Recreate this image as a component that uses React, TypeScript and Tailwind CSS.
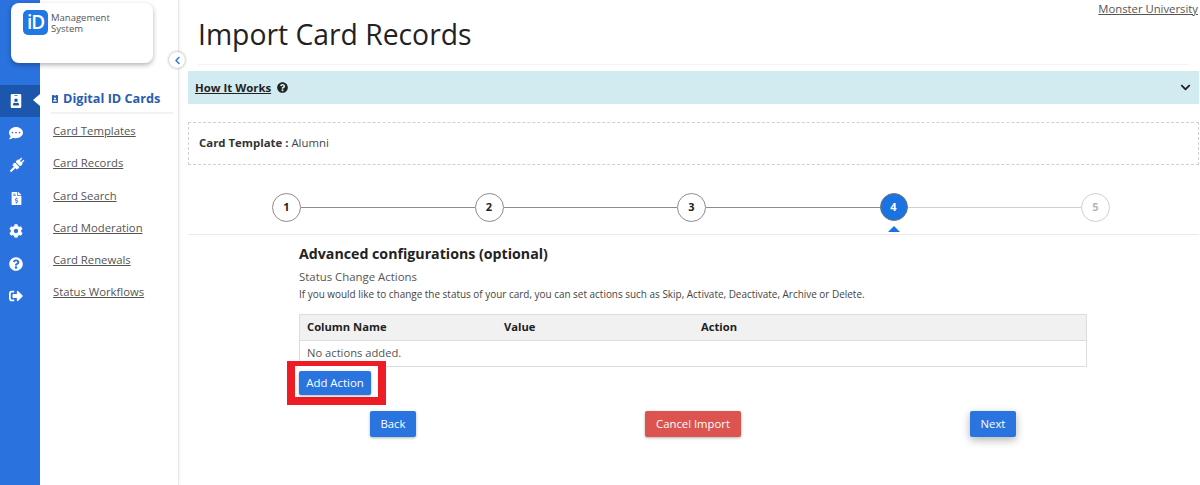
import React from 'react';
import {
  FaIdBadge,
  FaCommentDots,
  FaFileInvoiceDollar,
  FaCog,
  FaQuestionCircle,
  FaSignOutAlt,
  FaChevronDown,
  FaChevronLeft,
} from 'react-icons/fa';

// diagonal two part connector, no package has this one
const PlugIcon = ({ size }: { size: number }) => (
  <svg width={size} height={size} viewBox="0 0 16 16" fill="currentColor">
    <g transform="rotate(45 8 8)">
      <rect x="5.9" y="-0.4" width="1.3" height="3.4" />
      <rect x="8.8" y="-0.4" width="1.3" height="3.4" />
      <rect x="4.8" y="2.6" width="6.4" height="3.6" rx="1" />
      <rect x="4.8" y="7" width="6.4" height="3.6" rx="1" />
      <rect x="7.1" y="10" width="1.8" height="6" />
    </g>
  </svg>
);

const railIcons = [
  { Icon: FaCommentDots, size: 14 },
  { Icon: PlugIcon, size: 17 },
  { Icon: FaFileInvoiceDollar, size: 13 },
  { Icon: FaCog, size: 14 },
  { Icon: FaQuestionCircle, size: 14 },
  { Icon: FaSignOutAlt, size: 14 },
];

const menuLinks = ['Card Templates', 'Card Records', 'Card Search', 'Card Moderation', 'Card Renewals', 'Status Workflows'];

const steps = [1, 2, 3, 4, 5];

const StepDot = ({ n }: { n: number }) => {
  if (n === 4) {
    return (
      <div className="relative z-10 flex h-[28px] w-[28px] shrink-0 items-center justify-center rounded-full border border-[#777] bg-[#1a73e0] text-[11px] font-bold text-white">
        {n}
        <div className="absolute left-[7px] top-[32px] h-0 w-0 border-x-[6px] border-b-[6px] border-x-transparent border-b-[#1a73e0]" />
      </div>
    );
  }
  if (n === 5) {
    return (
      <div className="z-10 flex h-[29px] w-[29px] shrink-0 items-center justify-center rounded-full border border-[#d0d0d0] bg-white text-[11px] font-bold text-[#b5b5b5]">
        {n}
      </div>
    );
  }
  return (
    <div className="z-10 flex h-[29px] w-[29px] shrink-0 items-center justify-center rounded-full border border-[#8c8c8c] bg-white text-[11px] font-bold text-[#222]">
      {n}
    </div>
  );
};

const ActionButton = ({ label, wide, red, shadow }: { label: string; wide?: boolean; red?: boolean; shadow?: boolean }) => (
  <button
    className={`h-[26px] rounded-[2px] text-[11.3px] text-white ${wide ? 'w-[96px]' : 'w-[46px]'} ${red ? 'bg-[#db5450]' : 'bg-[#2a74e0]'} ${
      shadow ? 'shadow-[0_3px_8px_rgba(0,0,0,0.3)]' : 'shadow-[0_1px_3px_rgba(0,0,0,0.3)]'
    }`}
  >
    {label}
  </button>
);

export default function App() {
  return (
    <div className="flex h-[485px] w-[1200px] overflow-hidden bg-white font-['Open_Sans',sans-serif] text-[#444]">
      {/* Icon rail */}
      <div className="flex w-[40px] shrink-0 flex-col bg-[#2a72de] pt-[85px]">
        <div className="flex h-[32px] items-center justify-center bg-[#1c57ad] pr-[8px] text-white">
          <FaIdBadge size={14} />
        </div>
        {railIcons.map(({ Icon, size }, i) => (
          <div key={i} className="flex h-[32.6px] items-center justify-center pr-[8px] text-white">
            <Icon size={size} />
          </div>
        ))}
      </div>

      {/* Menu column */}
      <div className="relative flex w-[139px] shrink-0 flex-col border-r border-[#e8e8e8] pl-[11px] pr-[5px] pt-[85px] shadow-[1px_0_3px_rgba(0,0,0,0.05)]">
        <div className="absolute left-[-29px] top-[3px] z-20 h-[60px] w-[142px] rounded-[8px] bg-white shadow-[0_2px_5px_rgba(0,0,0,0.3)]">
          <div className="absolute left-[12px] top-[7px] flex h-[25px] w-[25px] items-center justify-center rounded-[5px] bg-[#1f78e6] text-[19px] font-semibold leading-none tracking-[-1px] text-white">
            iD
          </div>
          <div className="absolute left-[40px] top-[9px] text-[9.5px] leading-[11px] text-[#555]">
            Management
            <br />
            System
          </div>
        </div>
        <div className="absolute left-[129px] top-[52px] z-20 flex h-[16px] w-[16px] items-center justify-center rounded-full bg-white text-[#2a72de] shadow-[0_0_3px_rgba(0,0,0,0.4)]">
          <FaChevronLeft size={9} />
        </div>
        <div className="absolute left-[-7px] top-[94px] h-0 w-0 border-y-[6px] border-r-[7px] border-y-transparent border-r-white" />

        <div className="flex h-[29px] items-center gap-[4px] border-b-2 border-[#f2f2f2] text-[#2a5db0]">
          <FaIdBadge size={8} />
          <span className="text-[12.7px] font-bold">Digital ID Cards</span>
        </div>
        <div className="flex flex-col gap-[13.7px] pl-[2px] pt-[8px]">
          {menuLinks.map((l) => (
            <a key={l} className="text-[11.3px] leading-[18.6px] text-[#555] underline">
              {l}
            </a>
          ))}
        </div>
      </div>

      {/* Main content */}
      <div className="relative ml-[9px] flex w-[1011px] shrink-0 flex-col">
        <a className="absolute right-[1px] top-0 text-[11.3px] leading-[17px] text-[#555] underline">Monster University</a>
        <h1 className="ml-[10px] mr-[10px] h-[65px] border-b border-[#f3f3f3] pt-[12px] text-[28.3px] font-normal leading-[44px] text-[#222]">
          Import Card Records
        </h1>
        <div className="mt-[6px] flex h-[33px] items-center justify-between bg-[#d1ebf0] pl-[7px] pr-[8px] text-[#222]">
          <div className="flex items-center gap-[6px]">
            <span className="text-[11.4px] font-bold underline">How It Works</span>
            <FaQuestionCircle size={11} />
          </div>
          <FaChevronDown size={11} />
        </div>
        <div className="mt-[18px] flex h-[43px] items-center border border-dashed border-[#d0d0d0] pb-[2px] pl-[10px] text-[11.4px]">
          <span className="font-bold text-[#333]">Card Template :&nbsp;</span>
          Alumni
        </div>

        {/* Stepper */}
        <div className="mt-[28px] flex h-[42px] items-start border-b border-[#eaeaea] pl-[84px] pr-[89px]">
          {steps.map((n) => (
            <React.Fragment key={n}>
              <StepDot n={n} />
              {n < 5 && <div className={`mt-[14px] h-px flex-1 ${n < 4 ? 'bg-[#8c8c8c]' : 'bg-[#cfcfcf]'}`} />}
            </React.Fragment>
          ))}
        </div>

        {/* Advanced configurations */}
        <div className="ml-[111px] w-[788px] pt-[9px]">
          <h2 className="text-[14.2px] font-bold leading-[20px] text-[#222]">Advanced configurations (optional)</h2>
          <div className="mt-[4px] text-[11.4px] leading-[17px] text-[#555]">Status Change Actions</div>
          <div className="mt-[2px] text-[9.95px] leading-[15px] text-[#444]">
            If you would like to change the status of your card, you can set actions such as Skip, Activate, Deactivate, Archive or Delete.
          </div>
          <div className="mt-[12px] border border-[#ddd]">
            <div className="flex h-[26px] items-center border-b border-[#ddd] bg-[#f1f1f1] pl-[7px] text-[11.2px] font-bold text-[#222]">
              <span className="w-[197px]">Column Name</span>
              <span className="w-[197px]">Value</span>
              <span>Action</span>
            </div>
            <div className="flex h-[25px] items-center pl-[7px] text-[11.2px] text-[#555]">No actions added.</div>
          </div>
          <div className="ml-[-12px] mt-[-6px] w-fit border-x-[8px] border-b-[8px] border-t-[5px] border-[#ee1c25] bg-white pb-[2px] pl-[4px] pr-[7px] pt-[5px]">
            <button className="flex h-[24px] w-[72px] items-center justify-center rounded-[2px] bg-[#2a74e0] text-[11.4px] text-white shadow-[0_1px_3px_rgba(0,0,0,0.3)]">
              Add Action
            </button>
          </div>
          <div className="ml-[71px] mt-[6px] flex w-[646px] items-center justify-between">
            <ActionButton label="Back" />
            <ActionButton label="Cancel Import" wide red />
            <ActionButton label="Next" shadow />
          </div>
        </div>
      </div>
    </div>
  );
}
